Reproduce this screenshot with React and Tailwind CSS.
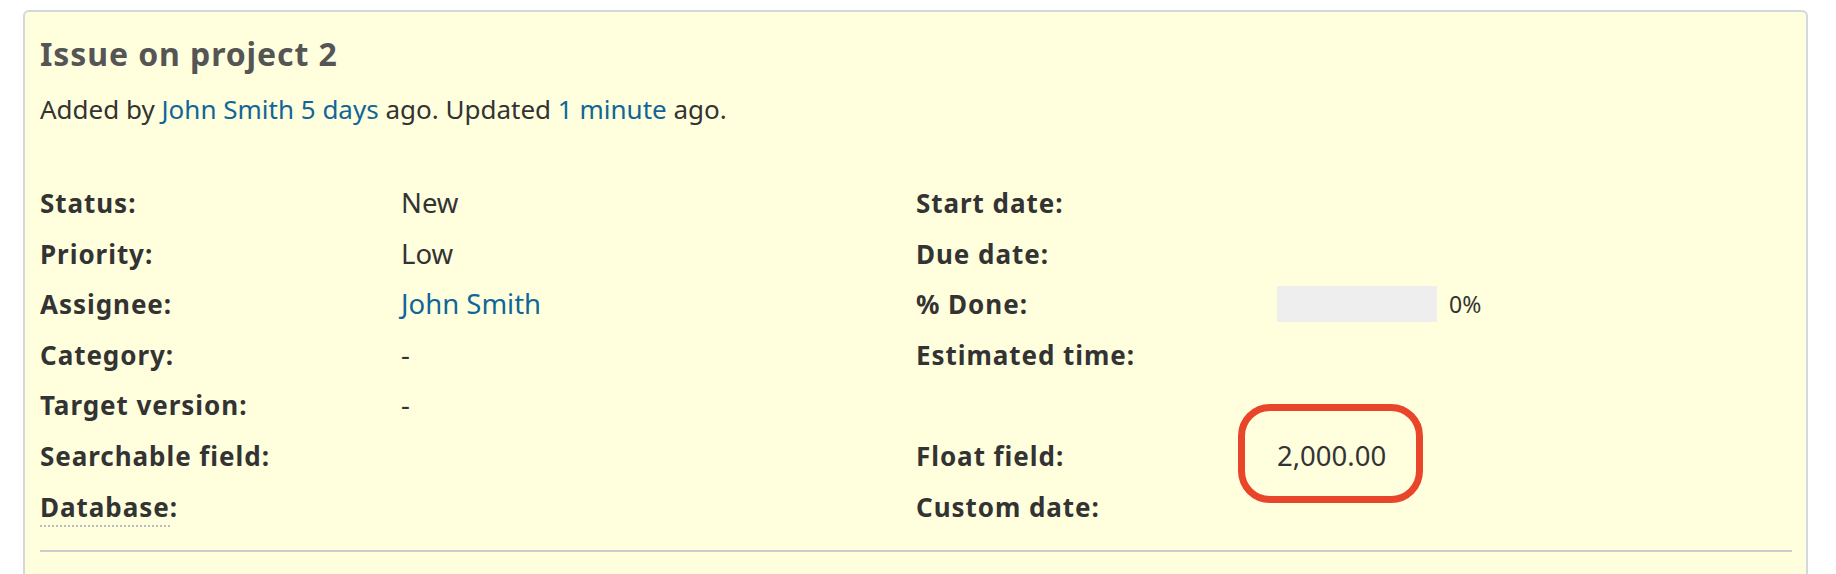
import React from "react";

const font = { fontFamily: '"Noto Sans", "Open Sans", sans-serif' };

function Row({ label, children, underline }) {
  return (
    <div className="flex h-[50.6px] items-center leading-[50.6px]">
      <div className="w-[361px] shrink-0 font-bold tracking-[0.95px] text-[#333]">
        {underline ? (
          <>
            <span className="border-b-2 border-dotted border-[#bbb] leading-none">{label}</span>:
          </>
        ) : (
          <>{label}:</>
        )}
      </div>
      <div className="flex min-w-0 flex-1 items-center text-[27.5px] text-[#333]">{children}</div>
    </div>
  );
}

export default function App() {
  return (
    <div className="min-h-screen bg-white pl-[23px] pr-[28px] pt-[10px]" style={font}>
      <div className="rounded-[6px] border-2 border-[#d3d8de] bg-[#ffffdd] pb-[60px] pl-[15px] pr-[14px] pt-[22px] text-[26px]">
        <h3 className="text-[32px] font-bold leading-[40px] tracking-[0.9px] text-[#555]">Issue on project 2</h3>
        <p className="mt-[17px] leading-[36px] text-[#333]">
          Added by <a className="text-[#169]">John Smith</a> <a className="text-[#169]">5 days</a> ago. Updated{" "}
          <a className="text-[#169]">1 minute</a> ago.
        </p>

        <div className="mt-[51px] grid grid-cols-2">
          <div>
            <Row label="Status">New</Row>
            <Row label="Priority">Low</Row>
            <Row label="Assignee">
              <a className="text-[#169]">John Smith</a>
            </Row>
            <Row label="Category">-</Row>
            <Row label="Target version">-</Row>
          </div>
          <div>
            <Row label="Start date"></Row>
            <Row label="Due date"></Row>
            <Row label="% Done">
              <div className="h-[36px] w-[160px] bg-[#eeeeee]"></div>
              <span className="ml-[12px] text-[23px] leading-none">0%</span>
            </Row>
            <Row label="Estimated time"></Row>
          </div>
        </div>

        <div className="grid grid-cols-2">
          <div>
            <Row label="Searchable field"></Row>
            <Row label="Database" underline></Row>
          </div>
          <div>
            <Row label="Float field">
              <span className="relative">
                2,000.00
                <span className="pointer-events-none absolute left-[-39px] top-[-27px] h-[99px] w-[185px] rounded-[32px] border-[7px] border-[#e9452b]"></span>
              </span>
            </Row>
            <Row label="Custom date"></Row>
          </div>
        </div>

        <hr className="mt-[18px] border-0 border-t-2 border-[#cccccc]" />
      </div>
    </div>
  );
}
